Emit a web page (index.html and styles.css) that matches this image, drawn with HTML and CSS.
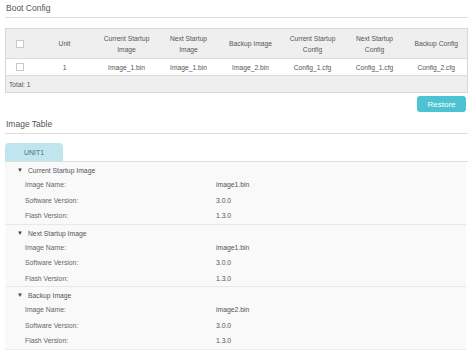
FILE: index.html
```html
<!DOCTYPE html>
<html>

<head>
    <title>Boot Config</title>
    <meta charset="utf-8">
    <link rel="stylesheet" href="styles.css">
</head>

<body>
    <div class="page">
        <div class="section-title">Boot Config</div>

        <table class="grid">
            <colgroup>
                <col class="col-check">
                <col><col><col><col><col><col><col>
            </colgroup>
            <thead>
                <tr>
                    <th><span class="box"></span></th>
                    <th>Unit</th>
                    <th>Current Startup<br>Image</th>
                    <th>Next Startup<br>Image</th>
                    <th>Backup Image</th>
                    <th>Current Startup<br>Config</th>
                    <th>Next Startup<br>Config</th>
                    <th>Backup Config</th>
                </tr>
            </thead>
            <tbody>
                <tr>
                    <td><span class="box"></span></td>
                    <td>1</td>
                    <td>Image_1.bin</td>
                    <td>Image_1.bin</td>
                    <td>Image_2.bin</td>
                    <td>Config_1.cfg</td>
                    <td>Config_1.cfg</td>
                    <td>Config_2.cfg</td>
                </tr>
            </tbody>
            <tfoot>
                <tr>
                    <td colspan="8">Total: 1</td>
                </tr>
            </tfoot>
        </table>

        <div class="actions">
            <button class="btn">Restore</button>
        </div>

        <div class="section-title second">Image Table</div>

        <div class="tabs">
            <div class="tab">UNIT1</div>
        </div>

        <div class="panel">
            <div class="group">
                <div class="group-head"><span class="caret">&#9660;</span>Current Startup Image</div>
                <div class="row"><span class="label">Image Name:</span><span class="value">image1.bin</span></div>
                <div class="row"><span class="label">Software Version:</span><span class="value">3.0.0</span></div>
                <div class="row"><span class="label">Flash Version:</span><span class="value">1.3.0</span></div>
            </div>
            <div class="group">
                <div class="group-head"><span class="caret">&#9660;</span>Next Startup Image</div>
                <div class="row"><span class="label">Image Name:</span><span class="value">image1.bin</span></div>
                <div class="row"><span class="label">Software Version:</span><span class="value">3.0.0</span></div>
                <div class="row"><span class="label">Flash Version:</span><span class="value">1.3.0</span></div>
            </div>
            <div class="group">
                <div class="group-head"><span class="caret">&#9660;</span>Backup Image</div>
                <div class="row"><span class="label">Image Name:</span><span class="value">image2.bin</span></div>
                <div class="row"><span class="label">Software Version:</span><span class="value">3.0.0</span></div>
                <div class="row"><span class="label">Flash Version:</span><span class="value">1.3.0</span></div>
            </div>
        </div>
    </div>
</body>

</html>
```

FILE: styles.css
```css
body {
    margin: 0;
    padding: 0;
    background: #fff;
    font-family: "Liberation Sans", Arial, sans-serif;
    color: #555;
}

.page {
    padding: 0 6px 0 5px;
}

.section-title {
    font-size: 8.5px;
    color: #555;
    padding: 3px 1px 0 1px;
    height: 14px;
    border-bottom: 1px solid #ddd;
}

.section-title.second {
    margin-top: 4px;
}

.grid {
    width: 100%;
    margin-top: 10px;
    border-collapse: collapse;
    border: 1px solid #d6d6d6;
    font-size: 6.7px;
    color: #555;
    table-layout: fixed;
}

.col-check {
    width: 28px;
}

.grid th {
    background: #efefef;
    font-weight: normal;
    height: 29px;
    padding: 0;
    line-height: 11px;
    text-align: center;
}

.grid tbody td {
    background: #fff;
    height: 16px;
    padding: 0;
    text-align: center;
    border-top: 1px solid #ddd;
    border-bottom: 1px solid #ddd;
}

.grid tfoot td {
    background: #efefef;
    height: 16px;
    padding: 0 0 0 3px;
    text-align: left;
}

.box {
    display: inline-block;
    width: 6px;
    height: 6px;
    border: 1px solid #c8c8c8;
    background: #fff;
    vertical-align: middle;
}

.actions {
    display: flex;
    justify-content: flex-end;
    margin-top: 3px;
    padding-right: 2px;
}

.btn {
    background: #4cc3d2;
    color: #fff;
    border: none;
    border-radius: 3px;
    font-family: "Liberation Sans", Arial, sans-serif;
    font-size: 8px;
    width: 49px;
    height: 16px;
    padding: 0;
}

.tabs {
    display: flex;
    margin-top: 9px;
    border-bottom: 1px solid #ddd;
}

.tab {
    width: 58px;
    height: 18px;
    line-height: 19px;
    background: #bfe6ee;
    border-radius: 4px 4px 0 0;
    font-size: 7px;
    color: #4a6c74;
    text-align: center;
}

.panel {
    background: #f9f9f9;
    margin-right: 2px;
    border-bottom: 1px solid #eee;
}

.group {
    border-bottom: 1px solid #e8e8e8;
}

.group:last-child {
    border-bottom: none;
}

.group-head {
    height: 15px;
    line-height: 16px;
    font-size: 6.8px;
    padding-left: 12px;
    color: #555;
}

.caret {
    font-size: 6px;
    margin-right: 5px;
    color: #444;
    vertical-align: 1px;
}

.row {
    display: flex;
    height: 15.5px;
    line-height: 15.5px;
    font-size: 6.8px;
    color: #666;
}

.label {
    width: 191px;
    padding-left: 20px;
}

.value {
    color: #555;
}
```
